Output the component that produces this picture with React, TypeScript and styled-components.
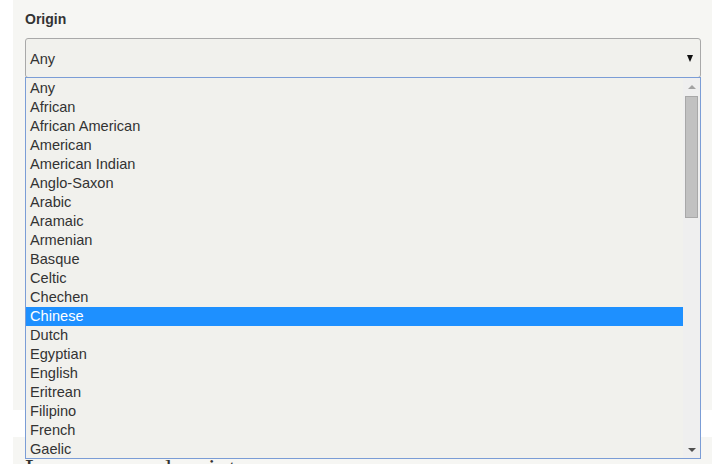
import React from 'react'
import styled, { createGlobalStyle } from 'styled-components'

const GlobalStyle = createGlobalStyle`
  html, body {
    margin: 0;
    padding: 0;
    background: #fff;
  }
  body {
    font-family: 'Liberation Sans', Arial, sans-serif;
    overflow: hidden;
  }
`

const origins = [
  'Any',
  'African',
  'African American',
  'American',
  'American Indian',
  'Anglo-Saxon',
  'Arabic',
  'Aramaic',
  'Armenian',
  'Basque',
  'Celtic',
  'Chechen',
  'Chinese',
  'Dutch',
  'Egyptian',
  'English',
  'Eritrean',
  'Filipino',
  'French',
  'Gaelic',
]

const Page = styled.div`
  position: relative;
  width: 726px;
  height: 464px;
  overflow: hidden;
`

const Panel = styled.section<{ $height: number; $gap?: number }>`
  margin: ${p => p.$gap || 0}px 0 0 13px;
  width: 699px;
  height: ${p => p.$height}px;
  box-sizing: border-box;
  padding: 11px 12px 0;
  background: #f6f6f3;
`

const Label = styled.div`
  font-size: 14px;
  font-weight: bold;
  color: #333;
  line-height: 17px;
`

const Select = styled.div`
  margin-top: 10px;
  height: 40px;
  width: 676px;
  box-sizing: border-box;
  border: 1px solid #a9a9a9;
  border-radius: 3px;
  background: #f1f1ed;
  display: flex;
  align-items: center;
  justify-content: space-between;
  padding: 2px 7px 0 4px;
  font-size: 14.6px;
  color: #333;
`

const Caret = styled.span`
  width: 0;
  height: 0;
  border-left: 3.5px solid transparent;
  border-right: 3.5px solid transparent;
  border-top: 7px solid #111;
  margin-top: -1px;
`

const Heading = styled.div`
  font-family: 'Liberation Serif', 'Times New Roman', serif;
  font-size: 26px;
  line-height: 30px;
  color: #333;
  margin-top: 6px;
`

const Dropdown = styled.div`
  position: absolute;
  left: 25px;
  top: 77px;
  width: 676px;
  height: 382px;
  box-sizing: border-box;
  border: 1px solid #7b9dd6;
  background: #f1f1ed;
  display: flex;
  overflow: hidden;
`

const List = styled.ul`
  list-style: none;
  margin: 0;
  padding: 1px 0 0;
  flex: 1;
`

const Option = styled.li<{ $selected?: boolean }>`
  height: 19px;
  line-height: 19px;
  padding-left: 4px;
  font-size: 14.6px;
  color: ${p => (p.$selected ? '#fff' : '#333')};
  background: ${p => (p.$selected ? '#1e90ff' : 'transparent')};
  white-space: nowrap;
`

const Scrollbar = styled.div`
  width: 17px;
  background: #efefef;
  display: flex;
  flex-direction: column;
  align-items: center;
`

const ArrowBtn = styled.div<{ $down?: boolean }>`
  height: 17px;
  width: 17px;
  display: flex;
  align-items: center;
  justify-content: center;

  &::after {
    content: '';
    width: 0;
    height: 0;
    border-left: 4px solid transparent;
    border-right: 4px solid transparent;
    ${p =>
      p.$down ? 'border-top: 4px solid #505050;' : 'border-bottom: 4px solid #a3a3a3;'}
  }
`

const Thumb = styled.div`
  margin-top: 1px;
  width: 11px;
  height: 120px;
  background: #c1c1c1;
  border: 1px solid #a8a8a8;
`

const Spacer = styled.div`
  flex: 1;
`

const App: React.FC = () => {
  return (
    <Page>
      <GlobalStyle />
      <Panel $height={410}>
        <Label>Origin</Label>
        <Select>
          <span>Any</span>
          <Caret />
        </Select>
      </Panel>
      <Panel $height={40} $gap={27}>
        <Heading>Language and script</Heading>
      </Panel>

      <Dropdown>
        <List>
          {origins.map(o => (
            <Option key={o} $selected={o === 'Chinese'}>
              {o}
            </Option>
          ))}
        </List>
        <Scrollbar>
          <ArrowBtn />
          <Thumb />
          <Spacer />
          <ArrowBtn $down />
        </Scrollbar>
      </Dropdown>
    </Page>
  )
}

export default App
